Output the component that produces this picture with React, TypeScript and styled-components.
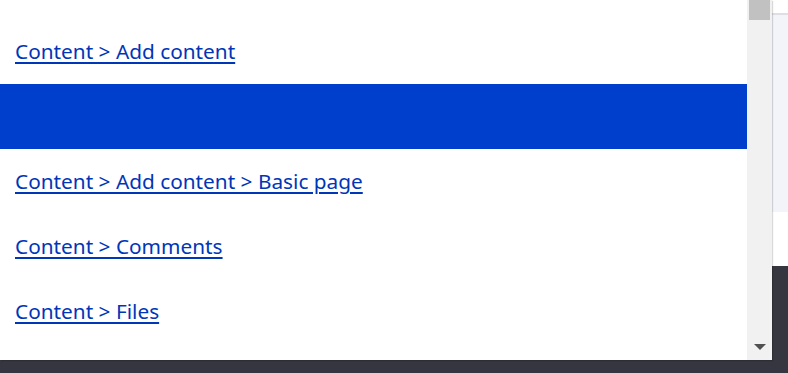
import React from 'react';
import styled, { createGlobalStyle } from 'styled-components';

const GlobalStyle = createGlobalStyle`
  html, body {
    margin: 0;
    padding: 0;
    height: 100%;
    overflow: hidden;
  }
  body {
    font-family: "Noto Sans", "Open Sans", sans-serif;
  }
`;

const Page = styled.div`
  position: relative;
  width: 788px;
  height: 373px;
  display: flex;
  flex-direction: column;
  background: #363641;
`;

const Header = styled.div`
  height: 13px;
  background: #ffffff;
  border-bottom: 2px solid #dedee4;
`;

const Content = styled.div`
  height: 197px;
  background: #f3f4f9;
`;

const Band = styled.div`
  height: 54px;
  background: #ffffff;
`;

const Popup = styled.div`
  position: absolute;
  left: 0;
  top: 0;
  width: 772px;
  height: 360px;
  display: flex;
  background: #ffffff;
  box-shadow: 1px 1px 1px rgba(0, 0, 0, 0.15);
`;

const List = styled.ul`
  flex: 1;
  margin: 0;
  padding: 19px 0 0;
  list-style: none;
  overflow: hidden;
`;

const Item = styled.li<{ $active?: boolean }>`
  height: 65px;
  display: flex;
  align-items: center;
  padding: 0 15px;
  background: ${(p) => (p.$active ? '#003ecc' : 'transparent')};
`;

const Link = styled.a<{ $active?: boolean }>`
  font-size: 20.8px;
  color: ${(p) => (p.$active ? '#003ecc' : '#0036b8')};
  text-decoration: underline;
  text-underline-offset: 3px;
  line-height: 1;
`;

const Track = styled.div`
  width: 25px;
  background: #f1f1f1;
  display: flex;
  flex-direction: column;
  align-items: center;
  justify-content: space-between;
  padding-bottom: 10px;
`;

const Thumb = styled.div`
  width: 21px;
  height: 20px;
  background: #c1c1c1;
`;

const Arrow = styled.div`
  width: 0;
  height: 0;
  border-left: 6px solid transparent;
  border-right: 6px solid transparent;
  border-top: 6px solid #505050;
`;

const items = [
  'Content > Add content',
  '',
  'Content > Add content > Basic page',
  'Content > Comments',
  'Content > Files',
];

const App: React.FC = () => {
  return (
    <Page>
      <GlobalStyle />
      <Header />
      <Content />
      <Band />
      <Popup>
        <List>
          {items.map((label, index) => (
            <Item key={index} $active={index === 1}>
              <Link href="#" $active={index === 1}>
                {label}
              </Link>
            </Item>
          ))}
        </List>
        <Track>
          <Thumb />
          <Arrow />
        </Track>
      </Popup>
    </Page>
  );
};

export default App;
